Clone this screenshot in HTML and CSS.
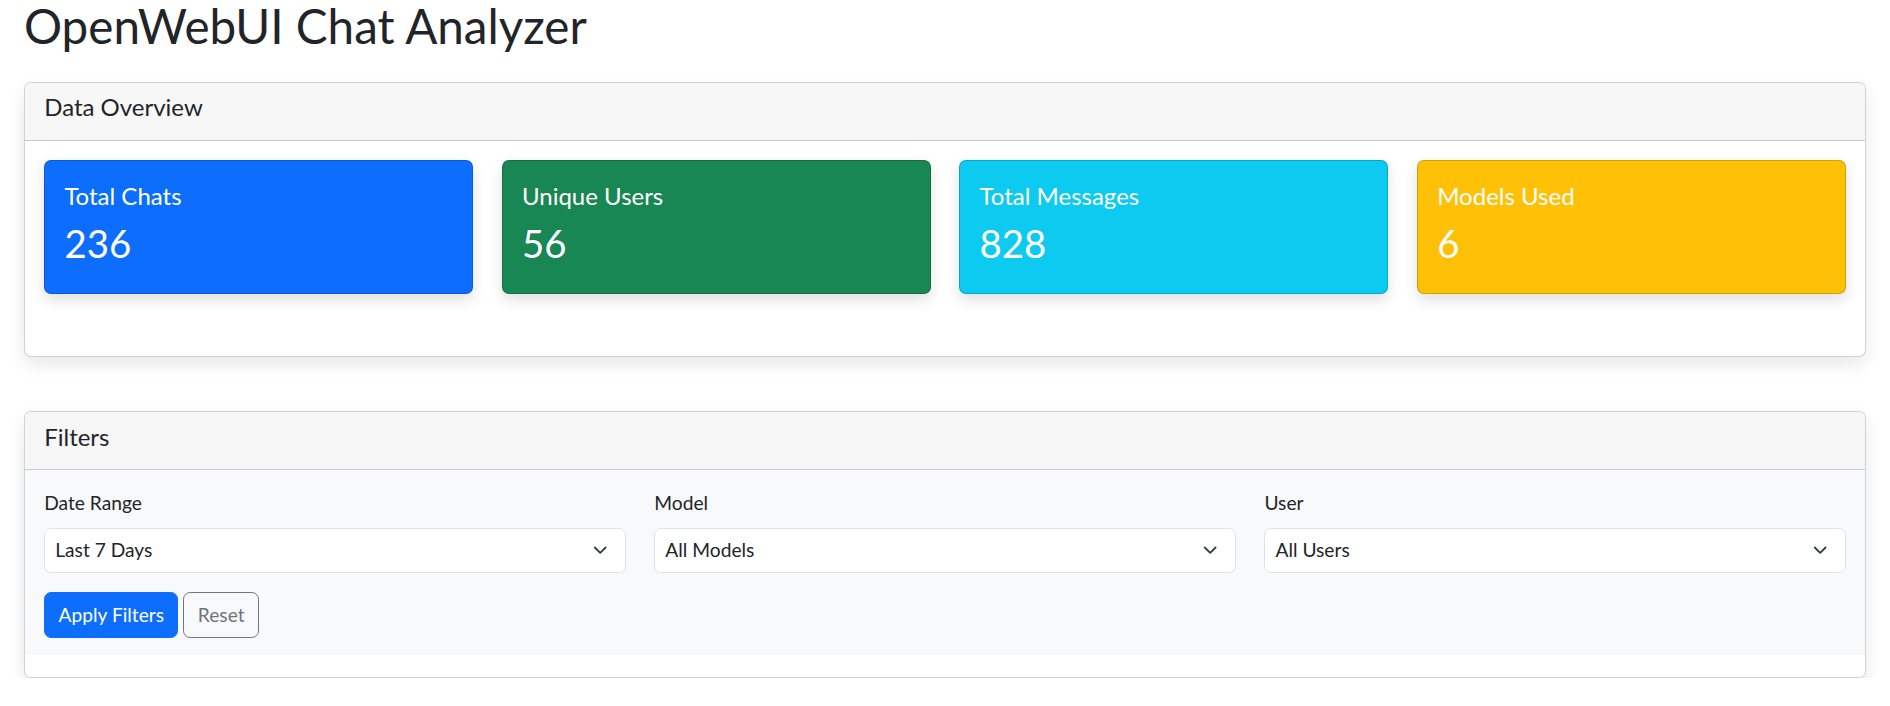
FILE: index.html
```html
<!DOCTYPE html>
<html lang="en">
<head>
<meta charset="utf-8">
<title>OpenWebUI Chat Analyzer</title>
<link rel="stylesheet" href="styles.css">
</head>
<body>
<div class="page">
  <h1 class="title">OpenWebUI Chat Analyzer</h1>

  <section class="panel panel-overview">
    <div class="panel-header"><h5 class="panel-title">Data Overview</h5></div>
    <div class="panel-body">
      <div class="stats">
        <div class="stat stat-blue">
          <h5 class="stat-label">Total Chats</h5>
          <h2 class="stat-value">236</h2>
        </div>
        <div class="stat stat-green">
          <h5 class="stat-label">Unique Users</h5>
          <h2 class="stat-value">56</h2>
        </div>
        <div class="stat stat-cyan">
          <h5 class="stat-label">Total Messages</h5>
          <h2 class="stat-value">828</h2>
        </div>
        <div class="stat stat-yellow">
          <h5 class="stat-label">Models Used</h5>
          <h2 class="stat-value">6</h2>
        </div>
      </div>
    </div>
  </section>

  <section class="panel panel-filters">
    <div class="panel-header"><h5 class="panel-title">Filters</h5></div>
    <div class="filters-body">
      <div class="fields">
        <div class="field">
          <label class="field-label" for="date-range">Date Range</label>
          <div class="select-wrap">
            <select id="date-range" class="select">
              <option>Last 7 Days</option>
              <option>Last 30 Days</option>
              <option>All Time</option>
            </select>
            <svg class="chevron" viewBox="0 0 16 16" aria-hidden="true"><path d="m2 5 6 6 6-6"/></svg>
          </div>
        </div>
        <div class="field">
          <label class="field-label" for="model">Model</label>
          <div class="select-wrap">
            <select id="model" class="select">
              <option>All Models</option>
            </select>
            <svg class="chevron" viewBox="0 0 16 16" aria-hidden="true"><path d="m2 5 6 6 6-6"/></svg>
          </div>
        </div>
        <div class="field">
          <label class="field-label" for="user">User</label>
          <div class="select-wrap">
            <select id="user" class="select">
              <option>All Users</option>
            </select>
            <svg class="chevron" viewBox="0 0 16 16" aria-hidden="true"><path d="m2 5 6 6 6-6"/></svg>
          </div>
        </div>
      </div>
      <div class="actions">
        <button class="btn btn-primary" type="button">Apply Filters</button>
        <button class="btn btn-outline" type="button">Reset</button>
      </div>
    </div>
    <div class="panel-foot"></div>
  </section>
</div>
</body>
</html>
```

FILE: styles.css
```css
* {
  box-sizing: border-box;
}

html, body {
  margin: 0;
  padding: 0;
  background: #ffffff;
}

body {
  font-family: Lato, "Noto Sans", "Liberation Sans", sans-serif;
  font-size: 19.2px;
  line-height: 1.5;
  color: #212529;
}

.page {
  padding: 0 24px;
}

.title {
  margin: -3px 0 27px;
  font-size: 47.6px;
  line-height: 57.6px;
  font-weight: 400;
  color: #212529;
}

.panel {
  background: #ffffff;
  border: 1px solid rgba(0, 0, 0, 0.175);
  border-radius: 7px;
  box-shadow: 0 8px 18px rgba(0, 0, 0, 0.09);
  overflow: hidden;
}

.panel-filters {
  margin-top: 54px;
}

.panel-header {
  background: #f7f7f7;
  border-bottom: 1px solid rgba(0, 0, 0, 0.175);
  padding: 10.8px 19.2px 8.4px;
}

.panel-title {
  margin: 0 0 9px;
  font-size: 24px;
  line-height: 28.8px;
  font-weight: 400;
}

.panel-body {
  padding: 19.2px 19.2px 62px;
}

.stats {
  display: grid;
  grid-template-columns: repeat(4, 1fr);
  gap: 28.8px;
}

.stat {
  border: 1px solid rgba(0, 0, 0, 0.175);
  border-radius: 7px;
  padding: 21px 19.2px 17.4px;
  color: #ffffff;
  box-shadow: 0 6px 14px rgba(0, 0, 0, 0.12);
}

.stat-blue { background: #0d6efd; }
.stat-green { background: #198754; }
.stat-cyan { background: #0dcaf0; }
.stat-yellow { background: #ffc107; }

.stat-label {
  margin: 0 0 9.6px;
  font-size: 24px;
  line-height: 28.8px;
  font-weight: 400;
}

.stat-value {
  margin: 0 0 9.6px;
  font-size: 38.4px;
  line-height: 46px;
  font-weight: 400;
}

.filters-body {
  background: #f8f9fa;
  padding: 19.2px 19.2px 17px;
}

.fields {
  display: grid;
  grid-template-columns: repeat(3, 1fr);
  gap: 28.8px;
  margin-bottom: 19.2px;
}

.field {
  display: flex;
  flex-direction: column;
}

.field-label {
  display: block;
  margin-bottom: 9.6px;
  line-height: 28.8px;
}

.select-wrap {
  position: relative;
}

.select {
  display: block;
  width: 100%;
  height: 45.6px;
  margin: 0;
  padding: 0 44px 0 10px;
  font-family: inherit;
  font-size: 19.2px;
  line-height: 28.8px;
  color: #212529;
  background: #ffffff;
  border: 1px solid #dee2e6;
  border-radius: 7.2px;
  -webkit-appearance: none;
  appearance: none;
  outline: none;
}

.chevron {
  position: absolute;
  right: 18px;
  top: 50%;
  width: 14.4px;
  height: 14.4px;
  margin-top: -7.2px;
  fill: none;
  stroke: #343a40;
  stroke-width: 2;
  stroke-linecap: round;
  stroke-linejoin: round;
  pointer-events: none;
}

.actions {
  display: flex;
  gap: 5px;
}

.btn {
  height: 45.6px;
  padding: 0 13.4px;
  font-family: inherit;
  font-size: 19.2px;
  line-height: 28.8px;
  border-radius: 7.2px;
  border: 1px solid transparent;
  cursor: pointer;
}

.btn-primary {
  background: #0d6efd;
  border-color: #0d6efd;
  color: #ffffff;
}

.btn-outline {
  background: transparent;
  border-color: #6c757d;
  color: #6c757d;
}

.panel-foot {
  height: 22px;
  background: #ffffff;
}
```
